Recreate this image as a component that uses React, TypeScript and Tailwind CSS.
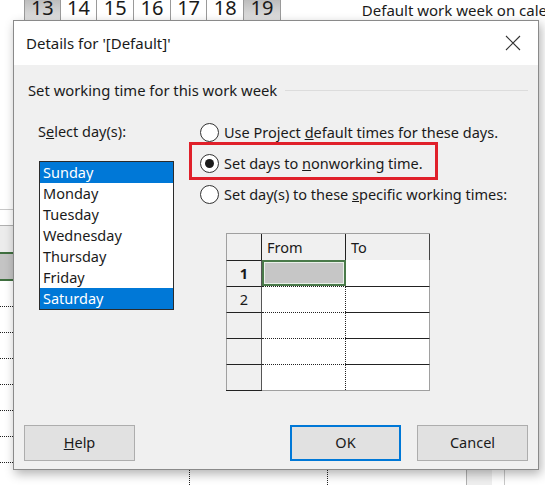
import React from "react";

const F = "font-['Noto_Sans',sans-serif]";

function Radio({ checked }: { checked?: boolean }) {
  return (
    <span className="flex h-[19px] w-[19px] shrink-0 items-center justify-center rounded-full border border-[#333] bg-white">
      {checked && <span className="h-[9px] w-[9px] rounded-full bg-[#1a1a1a]" />}
    </span>
  );
}

function Btn({ children, def }: { children: React.ReactNode; def?: boolean }) {
  return (
    <div
      className={
        "flex h-[36px] w-[111px] items-center justify-center bg-[#e1e1e1] text-[14.5px] text-[#1a1a1a] " +
        (def ? "border-2 border-[#0078d7]" : "border border-[#adadad]")
      }
    >
      {children}
    </div>
  );
}

const days = ["Sunday", "Monday", "Tuesday", "Wednesday", "Thursday", "Friday", "Saturday"];
const cal = [
  { n: "13", w: true },
  { n: "14" },
  { n: "15" },
  { n: "16" },
  { n: "17" },
  { n: "18" },
  { n: "19", w: true },
];

export default function App() {
  return (
    <div className={"relative h-[485px] w-[545px] overflow-hidden bg-white text-[#1a1a1a] " + F}>
      {/* background: calendar header */}
      <div className="flex h-[20px] pl-[24px]">
        {cal.map((c, i) => (
          <div
            key={i}
            className={
              "flex h-[20px] w-[36.7px] shrink-0 items-start justify-center border-r border-[#9a9a9a] text-[20px] leading-[16px] " +
              (c.w ? "bg-gradient-to-b from-[#bdbdbd] to-[#e2e2e2]" : "bg-white") +
              (i === 0 ? " border-l" : "")
            }
          >
            {c.n}
          </div>
        ))}
        <div className="ml-[81px] shrink-0 whitespace-nowrap text-[15px] leading-[20px]">Default work week on calendar</div>
      </div>

      {/* background: left strip */}
      <div className="absolute left-0 top-[209px] w-[13px]">
        <div className="h-[1px] bg-[#c8c8c8]" />
        <div className="h-[15px] bg-white" />
        <div className="h-[1px] bg-[#b0b0b0]" />
        <div className="h-[26px] bg-[#ececec]" />
        <div className="h-[2px] bg-[#3f6f3f]" />
        <div className="h-[25px] bg-[#c4c4c4]" />
        <div className="h-[2px] bg-[#3f6f3f]" />
        {[0, 1, 2, 3, 4, 5, 6].map((i) => (
          <div key={i} className="h-[26px] border-b border-dotted border-[#222]" />
        ))}
      </div>

      {/* background: bottom strip */}
      <div className="absolute left-[189px] top-[470px] h-[15px] border-l border-dotted border-[#222]" />
      <div className="absolute left-[327px] top-[470px] h-[15px] border-l border-dotted border-[#222]" />
      <div className="absolute left-[466px] top-[470px] h-[15px] w-[26px] border-l border-[#b0b0b0] bg-[#efefef]" />
      <div className="absolute left-[504px] top-[470px] h-[15px] border-l border-[#c8c8c8]" />

      {/* dialog */}
      <div className="absolute left-[13px] top-[20px] flex h-[450px] w-[526px] flex-col border border-[#8a8a8a] bg-[#f0f0f0] shadow-[2px_4px_10px_rgba(0,0,0,0.3)]">
        <div className="flex h-[44px] shrink-0 items-center justify-between bg-white pl-[12px] pr-[16px]">
          <span className="text-[15px]">Details for '[Default]'</span>
          <svg width="16" height="16" viewBox="0 0 16 16" className="mr-[1px]">
            <path d="M1 1 L15 15 M15 1 L1 15" stroke="#333" strokeWidth="1.1" fill="none" />
          </svg>
        </div>

        <div className="relative flex flex-1 flex-col text-[14.5px]">
          <div className="flex items-center pl-[14px] pr-[10px] pt-[15px]">
            <span className="text-[14.8px] leading-[20px]">Set working time for this work week</span>
            <div className="ml-[8px] h-[1px] flex-1 bg-[#dcdcdc]" />
          </div>

          <div className="mt-[17px] flex pl-[24px]">
            <div className="flex w-[136px] flex-col pt-[4px]">
              <span className="leading-[20px]">
                S<u>e</u>lect day(s):
              </span>
              <div className="ml-[1px] mt-[20px] flex w-[135px] flex-col border border-[#2b2b2b] bg-white">
                {days.map((d, i) => (
                  <div
                    key={d}
                    className={
                      "h-[21px] pl-[3px] leading-[21px] " +
                      (i === 0 || i === 6 ? "bg-[#0078d7] text-white" : "")
                    }
                  >
                    {d}
                  </div>
                ))}
              </div>
            </div>

            <div className="ml-[26px] flex flex-col">
              <div className="flex h-[31px] items-center gap-[5px]">
                <Radio />
                <span>
                  Use Project <u>d</u>efault times for these days.
                </span>
              </div>
              <div className="flex h-[31px] items-center gap-[5px]">
                <Radio checked />
                <span>
                  Set days to <u>n</u>onworking time.
                </span>
              </div>
              <div className="flex h-[31px] items-center gap-[5px]">
                <Radio />
                <span>
                  Set day(s) to these <u>s</u>pecific working times:
                </span>
              </div>

              {/* table */}
              <div className="ml-[26px] mt-[23px] flex w-[204px] flex-col">
                <div className="flex h-[27px] border-t border-[#a0a0a0]">
                  <div className="w-[36px] border-l border-r border-[#a0a0a0] border-r-[#222] bg-[#f0f0f0]" />
                  <div className="w-[84px] border-r border-[#222] bg-[#f0f0f0] pl-[5px] leading-[26px]">From</div>
                  <div className="w-[84px] border-r border-[#444] bg-[#f0f0f0] pl-[5px] leading-[26px]">To</div>
                </div>
                {[0, 1, 2, 3, 4].map((r) => (
                  <div key={r} className="flex h-[26px]">
                    <div className="flex w-[36px] items-center justify-center border-l border-r border-t border-[#a0a0a0] border-r-[#555] border-t-[#222] bg-[#f0f0f0]">
                      {r === 0 ? <b>1</b> : r === 1 ? "2" : ""}
                    </div>
                    <div
                      className={
                        "w-[84px] " +
                        (r === 0
                          ? "border-2 border-[#4a7a4a] bg-[#c6c6c6] shadow-[inset_0_0_0_1px_#e8f0e8]"
                          : "border-r border-t border-dotted border-[#222] bg-white")
                      }
                    />
                    <div
                      className={
                        "w-[84px] border-r border-solid border-r-[#a0a0a0] bg-white " +
                        (r === 0 ? "" : "border-t border-t-[#222] border-dotted")
                      }
                    />
                  </div>
                ))}
                <div className="flex h-[1px]">
                  <div className="w-[36px] bg-[#222]" />
                  <div className="w-[168px] bg-[#a0a0a0]" />
                </div>
              </div>
            </div>
          </div>

          <div className="mt-auto flex items-center pb-[8px] pl-[10px] pr-[10px]">
            <Btn>
              <span>
                <u>H</u>elp
              </span>
            </Btn>
            <div className="flex-1" />
            <Btn def>OK</Btn>
            <div className="w-[16px]" />
            <Btn>Cancel</Btn>
          </div>

          {/* red annotation box */}
          <div className="pointer-events-none absolute left-[175px] top-[77px] h-[38px] w-[249px] border-[3px] border-[#e0202a]" />
        </div>
      </div>
    </div>
  );
}
